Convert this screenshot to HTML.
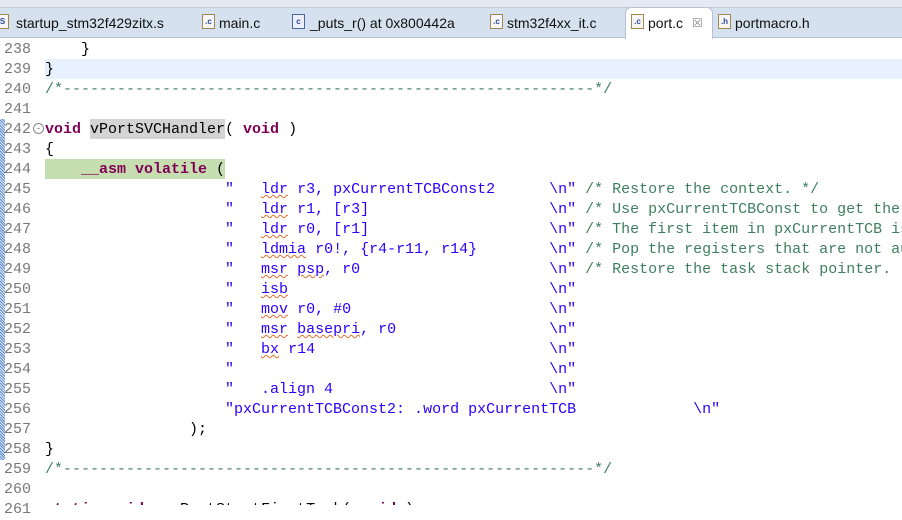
<!DOCTYPE html>
<html><head><style>
body{margin:0;width:902px;height:505px;overflow:hidden;background:#fff;position:relative;font-family:"Liberation Mono",monospace}
.tabs{position:absolute;left:0;top:0;width:902px;height:37px;background:#e4e9f4}
.tabbar{position:absolute;left:0;top:7px;width:902px;height:29px;background:#d6e1ef;border-top:1px solid #c3cbd8;border-bottom:1px solid #b6c2d3}
.tab{position:absolute;top:15px;font:14px "Liberation Sans",sans-serif;color:#111;white-space:nowrap}
.ic{position:absolute;top:14px;width:11px;height:13px;border:1px solid #a08850;background:#f6f6f6;font:bold 8px "Liberation Sans",sans-serif;color:#2a4a9a;text-align:center;line-height:13px}
.active{position:absolute;left:625px;top:7px;width:86px;height:31px;background:#fff;border:1px solid #b6c2d3;border-bottom:none;border-radius:6px 6px 0 0}
.ln{position:absolute;left:4px;width:30px;font-size:15px;color:#787878;line-height:20px}
.code{position:absolute;left:45px;width:857px;height:465px;overflow:hidden;font-size:15px;line-height:20px;white-space:pre;color:#000}
.k{color:#7f0055;font-weight:bold}.s{color:#2a00ff}.c{color:#3f7f5f}
.u{text-decoration:underline wavy #e07030;text-decoration-thickness:1px}
</style></head><body>
<div class="tabs"></div><div class="tabbar"></div>
<div class="active"></div>
<div class="ic" style="left:-4px">S</div><div class="tab" style="left:16px">startup_stm32f429zitx.s</div>
<div class="ic" style="left:202px">.c</div><div class="tab" style="left:219px">main.c</div>
<div class="ic" style="left:292px;border-color:#4a6a9a;background:#eef">c</div><div class="tab" style="left:310px">_puts_r() at 0x800442a</div>
<div class="ic" style="left:490px">.c</div><div class="tab" style="left:507px">stm32f4xx_it.c</div>
<div class="ic" style="left:631px">.c</div><div class="tab" style="left:648px">port.c</div><div class="tab" style="left:692px;color:#888;font-size:12px;top:16px">☒</div>
<div class="ic" style="left:718px">.h</div><div class="tab" style="left:735px">portmacro.h</div>

<div style="position:absolute;left:45px;top:59px;width:857px;height:20px;background:#e8f2fe"></div>
<div style="position:absolute;left:90px;top:119px;width:135px;height:20px;background:#d4d4d4"></div>
<div style="position:absolute;left:45px;top:159px;width:180px;height:20px;background:#c7deb0"></div>
<div style="position:absolute;left:0;top:119px;width:5px;height:341px;background:repeating-linear-gradient(45deg,#5a8ad0 0 1px,#dfe8f6 1px 2px)"></div>
<div style="position:absolute;left:33px;top:123px;width:9px;height:9px;border:1px solid #888;border-radius:50%;font:9px sans-serif;line-height:8px;text-align:center;color:#666">-</div>

<div class="ln" style="top:40px">238<br>239<br>240<br>241<br>242<br>243<br>244<br>245<br>246<br>247<br>248<br>249<br>250<br>251<br>252<br>253<br>254<br>255<br>256<br>257<br>258<br>259<br>260<br>261</div>
<div class="code" style="top:40px">    }
}
<span class="c">/*-----------------------------------------------------------*/</span>

<span class="k">void</span> vPortSVCHandler( <span class="k">void</span> )
{
    <span class="k">__asm volatile</span> (
                    <span class="s">"   <span class="u">ldr</span> r3, pxCurrentTCBConst2      \n"</span> <span class="c">/* Restore the context. */</span>
                    <span class="s">"   <span class="u">ldr</span> r1, [r3]                    \n"</span> <span class="c">/* Use pxCurrentTCBConst to get the pxCurrentTCB address. */</span>
                    <span class="s">"   <span class="u">ldr</span> r0, [r1]                    \n"</span> <span class="c">/* The first item in pxCurrentTCB is the task top of stack. */</span>
                    <span class="s">"   <span class="u">ldmia</span> r0!, {r4-r11, r14}        \n"</span> <span class="c">/* Pop the registers that are not automatically saved. */</span>
                    <span class="s">"   <span class="u">msr</span> <span class="u">psp</span>, r0                     \n"</span> <span class="c">/* Restore the task stack pointer. */</span>
                    <span class="s">"   <span class="u">isb</span>                             \n"</span>
                    <span class="s">"   <span class="u">mov</span> r0, #0                      \n"</span>
                    <span class="s">"   <span class="u">msr</span> <span class="u">basepri</span>, r0                 \n"</span>
                    <span class="s">"   <span class="u">bx</span> r14                          \n"</span>
                    <span class="s">"                                   \n"</span>
                    <span class="s">"   .align 4                        \n"</span>
                    <span class="s">"pxCurrentTCBConst2: .word pxCurrentTCB             \n"</span>
                );
}
<span class="c">/*-----------------------------------------------------------*/</span>

<span class="k">static</span> <span class="k">void</span> prvPortStartFirstTask( <span class="k">void</span> )</div>
</body></html>
